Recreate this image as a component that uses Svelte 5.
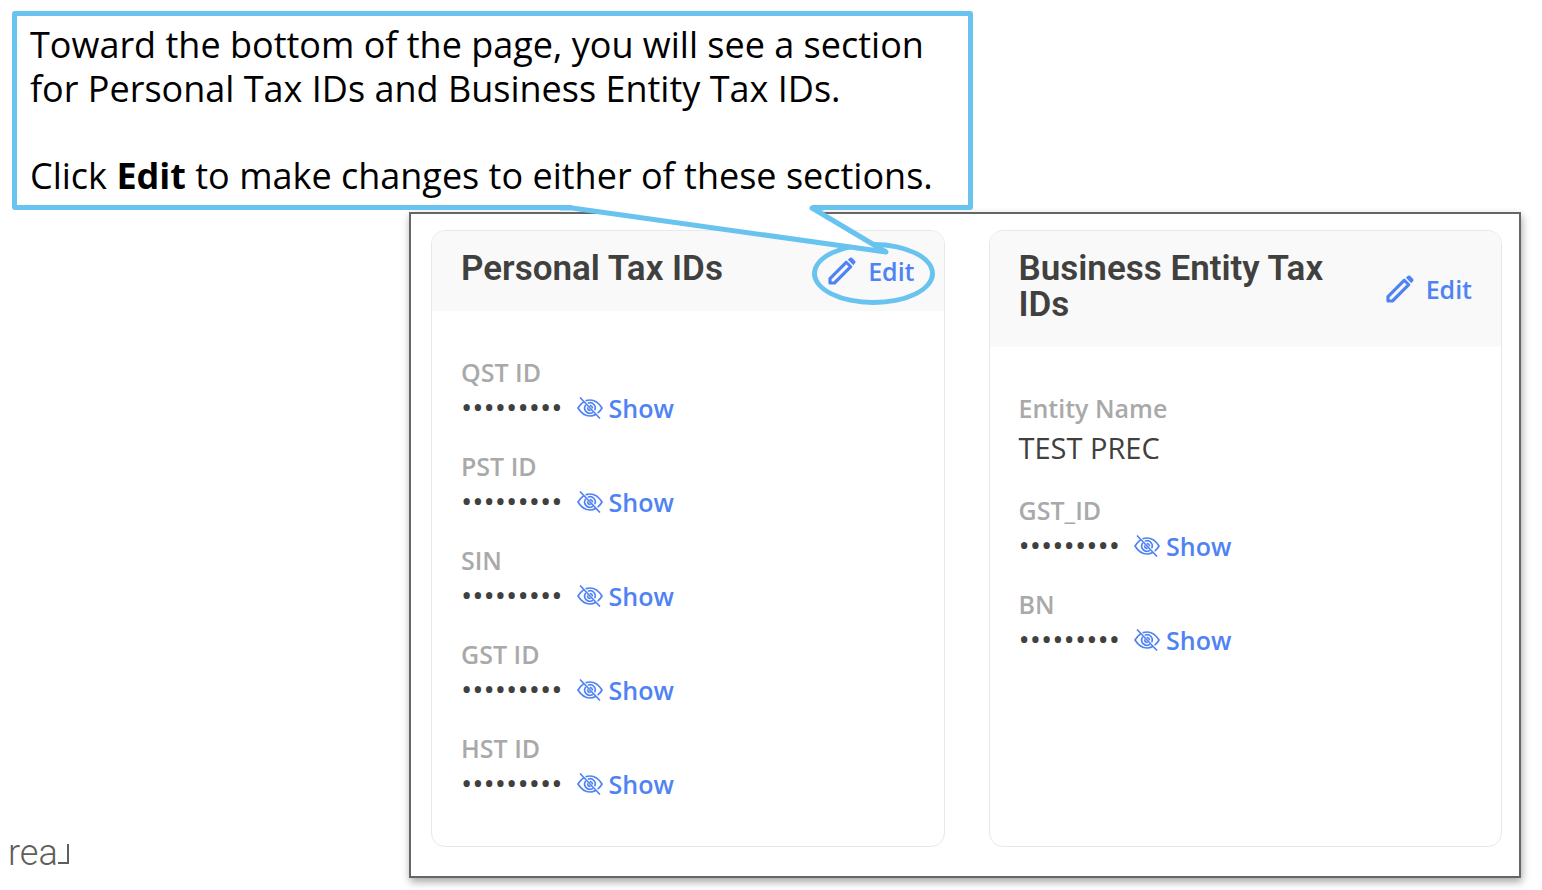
<script>
  const cards = [
    {
      title: 'Personal Tax IDs',
      circled: true,
      fields: [
        { label: 'QST ID' },
        { label: 'PST ID' },
        { label: 'SIN' },
        { label: 'GST ID' },
        { label: 'HST ID' }
      ]
    },
    {
      title: 'Business Entity Tax IDs',
      circled: false,
      fields: [
        { label: 'Entity Name', value: 'TEST PREC' },
        { label: 'GST_ID' },
        { label: 'BN' }
      ]
    }
  ];
</script>

<main class="slide">
  <section class="callout">
    <p>Toward the bottom of the page, you will see a section for Personal Tax IDs and Business Entity Tax IDs.</p>
    <p>Click <strong>Edit</strong> to make changes to either of these sections.</p>
    <svg class="tail" width="340" height="60" viewBox="0 0 340 60" aria-hidden="true">
      <path d="M20 12 L334 56 L260 12 Z" fill="#fff" />
      <path d="M20 12 H260" stroke="#fff" stroke-width="7" />
      <path d="M8 12 H20 L334 56 L260 12 H272" fill="none" stroke="#69c3ef" stroke-width="5" stroke-linejoin="round" />
    </svg>
  </section>

  <div class="logo" role="img" aria-label="real">rea<span class="corner"></span></div>

  <section class="panel">
    {#each cards as card}
      <article class="card">
        <header>
          <h2>{card.title}</h2>
          <button class="edit" type="button">
            <svg width="28" height="28" viewBox="0 0 28 28" aria-hidden="true">
              <path d="M2 26 V21.6 L18.4 5.2 L22.8 9.6 L6.4 26 Z" fill="none" stroke="currentColor" stroke-width="3.2" stroke-linejoin="round" />
              <path d="M19.8 2.8 L22 .8 Q23 0 24 .8 L27.2 4 Q28 5 27.2 6 L25.2 8.2 Z" fill="currentColor" />
              <path d="M18.6 2.6 L25.4 9.4" stroke="#f9f9f9" stroke-width="1.2" />
            </svg>
            Edit
            {#if card.circled}<span class="ring"></span>{/if}
          </button>
        </header>
        <dl>
          {#each card.fields as field}
            <div class="field">
              <dt>{field.label}</dt>
              {#if field.value}
                <dd class="plain">{field.value}</dd>
              {:else}
                <dd>
                  <span class="dots">•••••••••</span>
                  <button class="show" type="button">
                    <svg width="26" height="22" viewBox="0 0 26 22" fill="none" stroke="currentColor" stroke-width="1.7" stroke-linecap="round" aria-hidden="true">
                      <path d="M6.2 5.2 Q3.4 7.4 1 11 Q6 19 13 19 Q16 19 18.6 17.6" />
                      <path d="M9.2 3.6 Q11 3 13 3 Q20 3 25 11 Q23.4 13.8 21.2 15.7" />
                      <path d="M8.4 8.4 A5.2 5.2 0 0 0 15.2 15.7" />
                      <path d="M11.4 6 A5.2 5.2 0 0 1 18 12.6" />
                      <path d="M10.6 11 A2.6 2.6 0 0 0 13 13.4 M13.4 8.6 A2.6 2.6 0 0 1 15.4 10.6" />
                      <path d="M3.5 1 L22.5 21" />
                    </svg>
                    Show
                  </button>
                </dd>
              {/if}
            </div>
          {/each}
        </dl>
      </article>
    {/each}
  </section>
</main>

<style>
  :global(body) {
    margin: 0;
    background: #fff;
  }
  .slide {
    display: grid;
    grid-template-columns: 397px 1fr;
    row-gap: 2px;
    padding: 11px 21px 12px 12px;
    font-family: 'Open Sans', sans-serif;
  }
  .callout {
    position: relative;
    z-index: 1;
    grid-column: 1 / -1;
    box-sizing: border-box;
    max-width: 961px;
    padding: 7px 13px;
    border: 5px solid #69c3ef;
    border-radius: 3px;
    background: #fff;
    color: #000;
    font-size: 36px;
    line-height: 44px;
  }
  p {
    margin: 0;
  }
  p + p {
    margin-top: 43px;
  }
  .tail {
    position: absolute;
    left: 535px;
    top: 180px;
  }
  .logo {
    display: flex;
    align-self: end;
    align-items: flex-end;
    margin: 0 0 9px -4px;
    color: #5f5e59;
    font: 300 36px/32px Roboto, sans-serif;
  }
  .corner {
    box-sizing: border-box;
    width: 11px;
    height: 20px;
    margin-bottom: 5px;
    border: solid currentColor;
    border-width: 0 2px 2px 0;
  }
  .panel {
    display: grid;
    grid-template-columns: 1fr 1fr;
    gap: 44px;
    padding: 16px 17px 29px 20px;
    border: 2px solid #666;
    background: #fff;
    box-shadow: 1px 4px 8px rgba(0, 0, 0, 0.35);
  }
  .card {
    overflow: hidden;
    border: 1px solid #e8e8e8;
    border-radius: 14px;
  }
  header {
    display: flex;
    align-items: center;
    justify-content: space-between;
    gap: 44px;
    padding: 18px 29px;
    background: #f9f9f9;
  }
  h2 {
    margin: 2px 0 6px;
    color: #40403e;
    font: 600 35px/36px Roboto, sans-serif;
  }
  button {
    display: flex;
    align-items: center;
    padding: 0;
    border: 0;
    background: none;
    color: #4f83f3;
    font: 600 25px/36px 'Open Sans', sans-serif;
    cursor: pointer;
  }
  .edit {
    position: relative;
    gap: 12px;
  }
  .ring {
    position: absolute;
    inset: -11px -20px -16px -16px;
    border: 5px solid #69c3ef;
    border-radius: 50%;
  }
  dl {
    display: flex;
    flex-direction: column;
    gap: 22px;
    margin: 0;
    padding: 43px 29px 44px;
  }
  dt {
    color: #a9a9a9;
    font: 600 25px/36px 'Open Sans', sans-serif;
  }
  dd {
    display: flex;
    gap: 14px;
    margin: 0;
    color: #40403e;
    font-size: 29px;
    line-height: 36px;
  }
  .plain {
    line-height: 44px;
  }
  .dots {
    font-size: 30px;
    line-height: 34px;
  }
  .show {
    gap: 6px;
  }
</style>
